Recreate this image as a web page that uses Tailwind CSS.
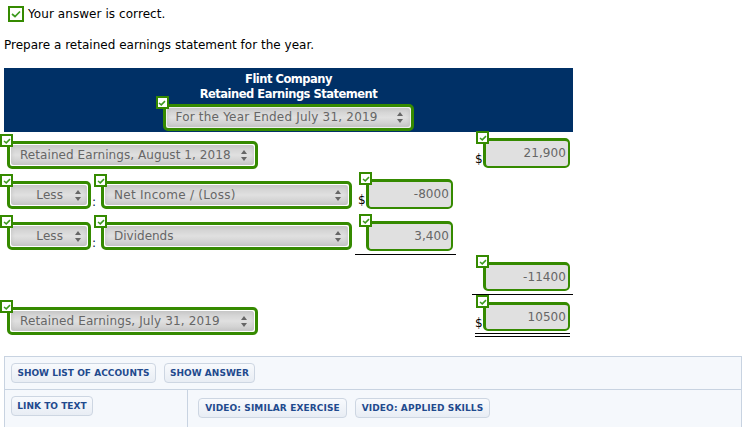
<!DOCTYPE html>
<html>
<head>
<meta charset="utf-8">
<script src="https://cdn.jsdelivr.net/npm/@tailwindcss/browser@4"></script>
</head>
<body class="bg-white w-[744px] h-[427px] overflow-hidden font-['DejaVu_Sans',sans-serif] text-[12px] tracking-[0.07px] text-black">

<div class="flex items-center pt-[4px] pl-[8px] h-[20px] box-content">
  <span class="w-[16px] h-[16px] border-2 border-[#358a00] bg-white flex items-center justify-center">
    <svg width="10" height="8" viewBox="0 0 10 8"><path d="M1 4 L4 6.5 L9 1.5" fill="none" stroke="#3c9a1e" stroke-width="1.7"/></svg>
  </span>
  <span class="ml-[4px] mb-[1px]">Your answer is correct.</span>
</div>

<p class="ml-[4px] mt-[14px] h-[30px] leading-[15px] tracking-[0.01px]">Prepare a retained earnings statement for the year.</p>

<div class="ml-[4px] w-[569px]">
  <div class="h-[64px] bg-[#003066] flex flex-col items-center pt-[4px] text-white font-bold leading-[15px]">
    <div class="text-[11.5px] tracking-[-0.5px]">Flint Company</div>
    <div class="text-[11.5px] tracking-[-0.5px]">Retained Earnings Statement</div>
    <div class="relative mr-[1px] mt-[2px] w-[251px] h-[27px] border-[3px] border-[#358a00] rounded-[5px] p-[1px] bg-[#eeeeee] font-normal text-[12px] tracking-[0.2px]">
      <span class="absolute left-[-10px] top-[-11px] w-[13px] h-[13px] border-2 border-[#358a00] bg-white flex items-center justify-center z-10"><svg width="8" height="6" viewBox="0 0 10 8"><path d="M1 4 L4 6.5 L9 1.5" fill="none" stroke="#3c9a1e" stroke-width="2"/></svg></span>
      <div class="h-full rounded-[3px] bg-gradient-to-b from-[#cccccc] via-[#e0e0e0] to-[#c9c9c9] shadow-[inset_0_0_4px_#c0c0c0] flex items-center justify-between pl-[9px] pr-[7px] text-[#666]">
        <span>For the Year Ended July 31, 2019</span>
        <svg width="6" height="11" viewBox="0 0 6 11"><path d="M3 0 L6 4 L0 4 Z M3 11 L6 7 L0 7 Z" fill="#666"/></svg>
      </div>
    </div>
  </div>

  <!-- Row 1 -->
  <div class="flex items-start h-[40px]">
    <div class="relative ml-[3px] mt-[9px] w-[251px] h-[28px] border-[3px] border-[#358a00] rounded-[5px] p-[1px]">
      <span class="absolute left-[-10px] top-[-10px] w-[13px] h-[13px] border-2 border-[#358a00] bg-white flex items-center justify-center z-10"><svg width="8" height="6" viewBox="0 0 10 8"><path d="M1 4 L4 6.5 L9 1.5" fill="none" stroke="#3c9a1e" stroke-width="2"/></svg></span>
      <div class="h-full rounded-[3px] bg-gradient-to-b from-[#cccccc] via-[#e0e0e0] to-[#c9c9c9] shadow-[inset_0_0_4px_#c0c0c0] flex items-center justify-between pl-[9px] pr-[7px] text-[#666]">
        <span>Retained Earnings, August 1, 2018</span>
        <svg width="6" height="11" viewBox="0 0 6 11"><path d="M3 0 L6 4 L0 4 Z M3 11 L6 7 L0 7 Z" fill="#666"/></svg>
      </div>
    </div>
    <div class="relative ml-[225px] mt-[6px] w-[87px] h-[30px] border-[3px] border-r-2 border-b-2 border-[#358a00] rounded-[5px] bg-[#e0e0e0] flex items-start justify-end pt-[3px] pr-[2px] text-[#666]">
      <span class="absolute left-[-10px] top-[-10px] w-[13px] h-[13px] border-2 border-[#358a00] bg-white flex items-center justify-center z-10"><svg width="8" height="6" viewBox="0 0 10 8"><path d="M1 4 L4 6.5 L9 1.5" fill="none" stroke="#3c9a1e" stroke-width="2"/></svg></span>
      <span class="absolute left-[-11px] top-[9px] text-black">$</span>
      <span>21,900</span>
    </div>
  </div>

  <!-- Row 2 -->
  <div class="flex items-start h-[43px]">
    <div class="relative ml-[3px] mt-[9px] w-[84px] h-[28px] border-[3px] border-[#358a00] rounded-[5px] p-[1px]">
      <span class="absolute left-[-10px] top-[-10px] w-[13px] h-[13px] border-2 border-[#358a00] bg-white flex items-center justify-center z-10"><svg width="8" height="6" viewBox="0 0 10 8"><path d="M1 4 L4 6.5 L9 1.5" fill="none" stroke="#3c9a1e" stroke-width="2"/></svg></span>
      <div class="h-full rounded-[3px] bg-gradient-to-b from-[#cccccc] via-[#e0e0e0] to-[#c9c9c9] shadow-[inset_0_0_4px_#c0c0c0] flex items-center justify-end gap-[12px] pr-[6px] text-[#666]">
        <span>Less</span>
        <svg width="6" height="11" viewBox="0 0 6 11"><path d="M3 0 L6 4 L0 4 Z M3 11 L6 7 L0 7 Z" fill="#666"/></svg>
      </div>
    </div>
    <div class="relative ml-[10px] mt-[9px] w-[251px] h-[28px] border-[3px] border-[#358a00] rounded-[5px] p-[1px]">
      <span class="absolute left-[-10px] top-[-10px] w-[13px] h-[13px] border-2 border-[#358a00] bg-white flex items-center justify-center z-10"><svg width="8" height="6" viewBox="0 0 10 8"><path d="M1 4 L4 6.5 L9 1.5" fill="none" stroke="#3c9a1e" stroke-width="2"/></svg></span>
      <span class="absolute left-[-12px] top-[9px] text-[#001a4d]">:</span>
      <div class="h-full rounded-[3px] bg-gradient-to-b from-[#cccccc] via-[#e0e0e0] to-[#c9c9c9] shadow-[inset_0_0_4px_#c0c0c0] flex items-center justify-between pl-[9px] pr-[7px] text-[#666]">
        <span class="tracking-[0.28px]">Net Income / (Loss)</span>
        <svg width="6" height="11" viewBox="0 0 6 11"><path d="M3 0 L6 4 L0 4 Z M3 11 L6 7 L0 7 Z" fill="#666"/></svg>
      </div>
    </div>
    <div class="relative ml-[14px] mt-[7px] w-[87px] h-[30px] border-[3px] border-r-2 border-b-2 border-[#358a00] rounded-[5px] bg-[#e0e0e0] flex items-start justify-end pt-[3px] pr-[2px] text-[#666]">
      <span class="absolute left-[-10px] top-[-10px] w-[13px] h-[13px] border-2 border-[#358a00] bg-white flex items-center justify-center z-10"><svg width="8" height="6" viewBox="0 0 10 8"><path d="M1 4 L4 6.5 L9 1.5" fill="none" stroke="#3c9a1e" stroke-width="2"/></svg></span>
      <span class="absolute left-[-11px] top-[9px] text-black">$</span>
      <span>-8000</span>
    </div>
  </div>

  <!-- Row 3 -->
  <div class="flex items-start h-[43px]">
    <div class="relative ml-[3px] mt-[7px] w-[84px] h-[28px] border-[3px] border-[#358a00] rounded-[5px] p-[1px]">
      <span class="absolute left-[-10px] top-[-10px] w-[13px] h-[13px] border-2 border-[#358a00] bg-white flex items-center justify-center z-10"><svg width="8" height="6" viewBox="0 0 10 8"><path d="M1 4 L4 6.5 L9 1.5" fill="none" stroke="#3c9a1e" stroke-width="2"/></svg></span>
      <div class="h-full rounded-[3px] bg-gradient-to-b from-[#cccccc] via-[#e0e0e0] to-[#c9c9c9] shadow-[inset_0_0_4px_#c0c0c0] flex items-center justify-end gap-[12px] pr-[6px] text-[#666]">
        <span>Less</span>
        <svg width="6" height="11" viewBox="0 0 6 11"><path d="M3 0 L6 4 L0 4 Z M3 11 L6 7 L0 7 Z" fill="#666"/></svg>
      </div>
    </div>
    <div class="relative ml-[10px] mt-[7px] w-[251px] h-[28px] border-[3px] border-[#358a00] rounded-[5px] p-[1px]">
      <span class="absolute left-[-10px] top-[-10px] w-[13px] h-[13px] border-2 border-[#358a00] bg-white flex items-center justify-center z-10"><svg width="8" height="6" viewBox="0 0 10 8"><path d="M1 4 L4 6.5 L9 1.5" fill="none" stroke="#3c9a1e" stroke-width="2"/></svg></span>
      <span class="absolute left-[-12px] top-[9px] text-[#001a4d]">:</span>
      <div class="h-full rounded-[3px] bg-gradient-to-b from-[#cccccc] via-[#e0e0e0] to-[#c9c9c9] shadow-[inset_0_0_4px_#c0c0c0] flex items-center justify-between pl-[9px] pr-[7px] text-[#666]">
        <span class="tracking-[0px]">Dividends</span>
        <svg width="6" height="11" viewBox="0 0 6 11"><path d="M3 0 L6 4 L0 4 Z M3 11 L6 7 L0 7 Z" fill="#666"/></svg>
      </div>
    </div>
    <div class="relative ml-[14px] mt-[6px] w-[87px] h-[30px] border-[3px] border-r-2 border-b-2 border-[#358a00] rounded-[5px] bg-[#e0e0e0] flex items-start justify-end pt-[3px] pr-[2px] text-[#666]">
      <span class="absolute left-[-10px] top-[-10px] w-[13px] h-[13px] border-2 border-[#358a00] bg-white flex items-center justify-center z-10"><svg width="8" height="6" viewBox="0 0 10 8"><path d="M1 4 L4 6.5 L9 1.5" fill="none" stroke="#3c9a1e" stroke-width="2"/></svg></span>
      <span class="absolute left-[-14px] bottom-[-6px] w-[101px] h-[1px] bg-black"></span>
      <span>3,400</span>
    </div>
  </div>

  <!-- Row 4 -->
  <div class="flex items-start h-[40px]">
    <div class="relative ml-[479px] mt-[4px] w-[87px] h-[29px] border-[3px] border-r-2 border-b-2 border-[#358a00] rounded-[5px] bg-[#e0e0e0] flex items-start justify-end pt-[3px] pr-[2px] text-[#666]">
      <span class="absolute left-[-10px] top-[-10px] w-[13px] h-[13px] border-2 border-[#358a00] bg-white flex items-center justify-center z-10"><svg width="8" height="6" viewBox="0 0 10 8"><path d="M1 4 L4 6.5 L9 1.5" fill="none" stroke="#3c9a1e" stroke-width="2"/></svg></span>
      <span class="absolute left-[-14px] bottom-[-6px] w-[101px] h-[1px] bg-black"></span>
      <span>-11400</span>
    </div>
  </div>

  <!-- Row 5 -->
  <div class="flex items-start h-[58px]">
    <div class="relative ml-[3px] mt-[9px] w-[251px] h-[28px] border-[3px] border-[#358a00] rounded-[5px] p-[1px]">
      <span class="absolute left-[-10px] top-[-10px] w-[13px] h-[13px] border-2 border-[#358a00] bg-white flex items-center justify-center z-10"><svg width="8" height="6" viewBox="0 0 10 8"><path d="M1 4 L4 6.5 L9 1.5" fill="none" stroke="#3c9a1e" stroke-width="2"/></svg></span>
      <div class="h-full rounded-[3px] bg-gradient-to-b from-[#cccccc] via-[#e0e0e0] to-[#c9c9c9] shadow-[inset_0_0_4px_#c0c0c0] flex items-center justify-between pl-[9px] pr-[7px] text-[#666]">
        <span class="tracking-[0.13px]">Retained Earnings, July 31, 2019</span>
        <svg width="6" height="11" viewBox="0 0 6 11"><path d="M3 0 L6 4 L0 4 Z M3 11 L6 7 L0 7 Z" fill="#666"/></svg>
      </div>
    </div>
    <div class="relative ml-[225px] mt-[4px] w-[87px] h-[29px] border-[3px] border-r-2 border-b-2 border-[#358a00] rounded-[5px] bg-[#e0e0e0] flex items-start justify-end pt-[3px] pr-[2px] text-[#666]">
      <span class="absolute left-[-10px] top-[-10px] w-[13px] h-[13px] border-2 border-[#358a00] bg-white flex items-center justify-center z-10"><svg width="8" height="6" viewBox="0 0 10 8"><path d="M1 4 L4 6.5 L9 1.5" fill="none" stroke="#3c9a1e" stroke-width="2"/></svg></span>
      <span class="absolute left-[-11px] top-[9px] text-black">$</span>
      <span class="absolute left-[-11px] bottom-[-8px] w-[95px] h-[4px] border-y border-black"></span>
      <span>10500</span>
    </div>
  </div>
</div>

<div class="ml-[4px] w-[738px] border-x border-t border-[#c8d3e1] bg-[#f5f8fc] h-[80px] font-bold text-[9px] tracking-[0.02px] text-[#1f4a8e]">
  <div class="h-[33px] border-b border-[#c8d3e1] flex items-start pt-[6px] pl-[6px] gap-[8px]">
    <span class="w-[145px] h-[20px] pt-[1px] border border-[#cdd6e2] rounded-[4px] bg-gradient-to-b from-[#f8fafd] to-[#e8edf4] flex items-center justify-center">SHOW LIST OF ACCOUNTS</span>
    <span class="w-[91px] h-[20px] pt-[1px] border border-[#cdd6e2] rounded-[4px] bg-gradient-to-b from-[#f8fafd] to-[#e8edf4] flex items-center justify-center">SHOW ANSWER</span>
  </div>
  <div class="flex h-[47px]">
    <div class="w-[183px] border-r border-[#c8d3e1] pt-[6px] pl-[6px]">
      <span class="w-[82px] h-[20px] pt-[1px] border border-[#cdd6e2] rounded-[4px] bg-gradient-to-b from-[#f8fafd] to-[#e8edf4] flex items-center justify-center">LINK TO TEXT</span>
    </div>
    <div class="flex items-start pt-[8px] pl-[10px] gap-[8px] tracking-[0.12px]">
      <span class="w-[149px] h-[20px] pt-[1px] border border-[#cdd6e2] rounded-[4px] bg-gradient-to-b from-[#f8fafd] to-[#e8edf4] flex items-center justify-center">VIDEO: SIMILAR EXERCISE</span>
      <span class="w-[135px] h-[20px] pt-[1px] border border-[#cdd6e2] rounded-[4px] bg-gradient-to-b from-[#f8fafd] to-[#e8edf4] flex items-center justify-center">VIDEO: APPLIED SKILLS</span>
    </div>
  </div>
</div>

</body>
</html>
